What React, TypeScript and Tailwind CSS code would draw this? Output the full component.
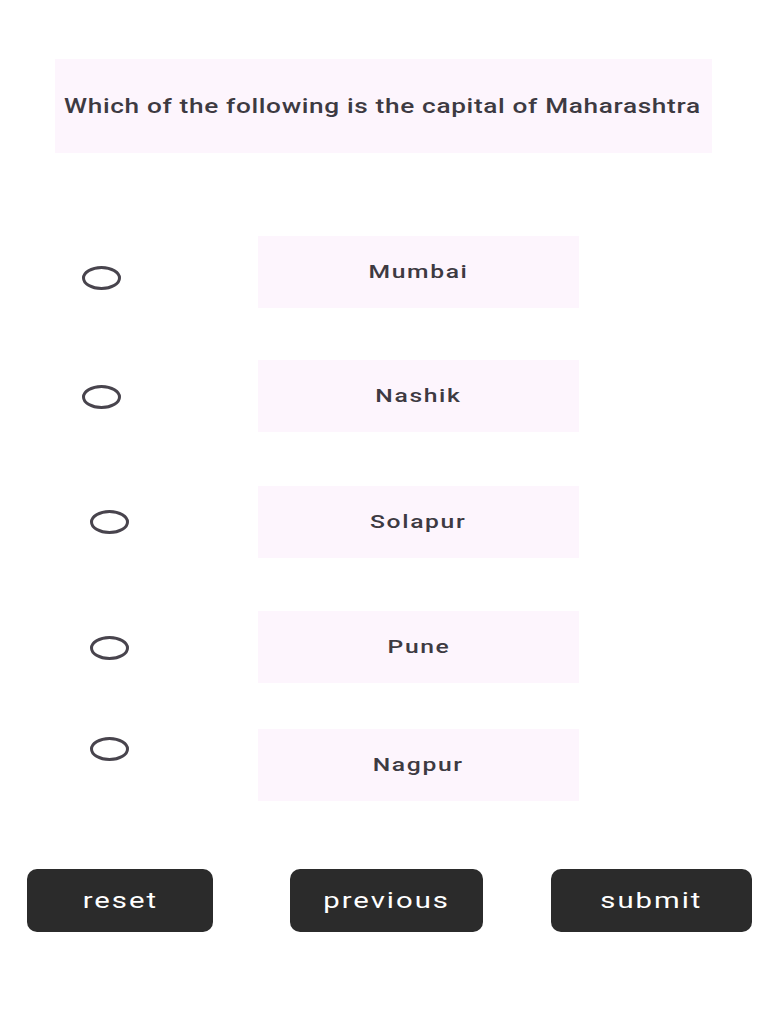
import React from 'react';

type Option = {
  label: string;
  radioClass: string; // offsets of the radio inside its column
};

const question = 'Which of the following is the capital of Maharashtra';

const options: Option[] = [
  { label: 'Mumbai', radioClass: 'ml-[82px] mt-[30px]' },
  { label: 'Nashik', radioClass: 'ml-[82px] mt-[25px]' },
  { label: 'Solapur', radioClass: 'ml-[90px] mt-[24px]' },
  { label: 'Pune', radioClass: 'ml-[90px] mt-[25px]' },
  { label: 'Nagpur', radioClass: 'ml-[90px] mt-[8px]' },
];

// gaps between option rows, taken from the screenshot
const rowGaps = ['mt-[83px]', 'mt-[52px]', 'mt-[54px]', 'mt-[53px]', 'mt-[46px]'];

const Radio = ({ className }: { className: string }) => (
  <div className={`w-[39px] h-[24px] rounded-[50%] border-[3px] border-[#48444d] ${className}`} />
);

const ActionButton = ({ label, className }: { label: string; className: string }) => (
  <button
    className={`h-[63px] rounded-[10px] bg-[#2b2b2b] text-white text-[22px] tracking-[1.5px] flex items-center justify-center ${className}`}
  >
    <span className="inline-block scale-x-[1.33]">{label}</span>
  </button>
);

export default function App() {
  return (
    <div className="w-full h-[1024px] bg-white font-['Roboto',sans-serif] text-[#3d3a42]">
      {/* Question */}
      <div className="pt-[59px] pl-[55px]">
        <div className="w-[657px] h-[94px] bg-[#fdf5fd] flex items-center pl-[9px]">
          <p className="text-[20px] font-medium tracking-[0.5px] origin-left scale-x-[1.31] whitespace-nowrap">
            {question}
          </p>
        </div>
      </div>

      {/* Options */}
      <div className="flex flex-col">
        {options.map((opt, i) => (
          <div key={opt.label} className={`flex items-start ${rowGaps[i]}`}>
            <div className="w-[258px] shrink-0">
              <Radio className={opt.radioClass} />
            </div>
            <div className="w-[321px] h-[72px] bg-[#fdf5fd] flex items-center justify-center pb-[2px]">
              <span className="inline-block text-[18px] font-medium tracking-[1.2px] scale-x-[1.37]">
                {opt.label}
              </span>
            </div>
          </div>
        ))}
      </div>

      {/* Actions */}
      <div className="flex items-start mt-[68px] pl-[27px]">
        <ActionButton label="reset" className="w-[186px]" />
        <ActionButton label="previous" className="w-[193px] ml-[77px]" />
        <ActionButton label="submit" className="w-[201px] ml-[68px]" />
      </div>
    </div>
  );
}
